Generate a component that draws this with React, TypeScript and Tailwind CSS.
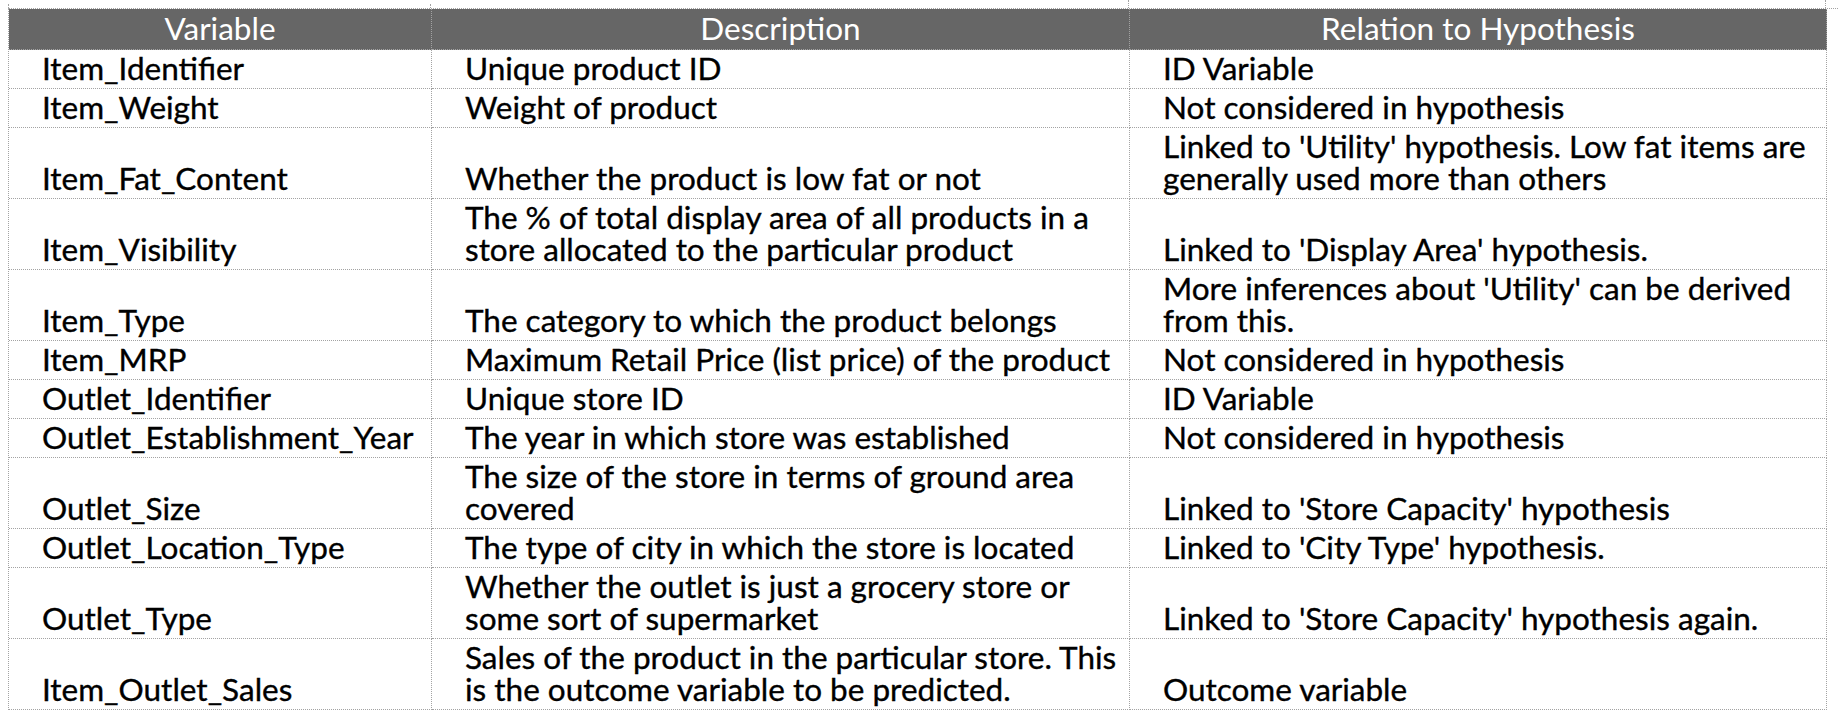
import React from 'react'

type Row = { v: string; d: string[]; r: string[] }

const rows: Row[] = [
  { v: 'Item_Identifier', d: ['Unique product ID'], r: ['ID Variable'] },
  { v: 'Item_Weight', d: ['Weight of product'], r: ['Not considered in hypothesis'] },
  {
    v: 'Item_Fat_Content',
    d: ['Whether the product is low fat or not'],
    r: ["Linked to 'Utility' hypothesis. Low fat items are", 'generally used more than others'],
  },
  {
    v: 'Item_Visibility',
    d: ['The % of total display area of all products in a', 'store allocated to the particular product'],
    r: ["Linked to 'Display Area' hypothesis."],
  },
  {
    v: 'Item_Type',
    d: ['The category to which the product belongs'],
    r: ["More inferences about 'Utility' can be derived", 'from this.'],
  },
  { v: 'Item_MRP', d: ['Maximum Retail Price (list price) of the product'], r: ['Not considered in hypothesis'] },
  { v: 'Outlet_Identifier', d: ['Unique store ID'], r: ['ID Variable'] },
  { v: 'Outlet_Establishment_Year', d: ['The year in which store was established'], r: ['Not considered in hypothesis'] },
  {
    v: 'Outlet_Size',
    d: ['The size of the store in terms of ground area', 'covered'],
    r: ["Linked to 'Store Capacity' hypothesis"],
  },
  { v: 'Outlet_Location_Type', d: ['The type of city in which the store is located'], r: ["Linked to 'City Type' hypothesis."] },
  {
    v: 'Outlet_Type',
    d: ['Whether the outlet is just a grocery store or', 'some sort of supermarket'],
    r: ["Linked to 'Store Capacity' hypothesis again."],
  },
  {
    v: 'Item_Outlet_Sales',
    d: ['Sales of the product in the particular store. This', 'is the outcome variable to be predicted.'],
    r: ['Outcome variable'],
  },
]

const grid = 'grid grid-cols-[423px_698px_697px]'
const line = 'border-[#a3a3a3] border-dotted'

function Cell({ lines, tall }: { lines: string[]; tall: boolean }) {
  return (
    <div
      className={`flex flex-col justify-end whitespace-nowrap border-r border-b ${line} pl-[33px] pb-[4px] [-webkit-text-stroke:0.35px_#000] ${
        tall ? 'h-[71px]' : 'h-[39px]'
      }`}
    >
      {lines.map((l, i) => (
        <div key={i}>{l}</div>
      ))}
    </div>
  )
}

export default function App() {
  return (
    <div className="w-[1838px] h-[722px] bg-white pl-2 font-['Lato',sans-serif] text-[31.5px] leading-[32px] text-black">
      <div className={grid}>
        <div className={`h-[4px] mt-[4px] border-l border-r ${line}`} />
        <div className={`h-[8px] border-r ${line}`} />
        <div className={`h-[8px] border-r ${line}`} />
      </div>
      <div className={`${grid} border-l border-t ${line}`}>
        {['Variable', 'Description', 'Relation to Hypothesis'].map(h => (
          <div
            key={h}
            className={`h-[41px] bg-[#666666] text-white text-center border-r border-b ${line} pt-[3px]`}
          >
            {h}
          </div>
        ))}
        {rows.map(row => {
          const tall = row.d.length > 1 || row.r.length > 1
          return (
            <React.Fragment key={row.v}>
              <Cell lines={[row.v]} tall={tall} />
              <Cell lines={row.d} tall={tall} />
              <Cell lines={row.r} tall={tall} />
            </React.Fragment>
          )
        })}
      </div>
    </div>
  )
}
